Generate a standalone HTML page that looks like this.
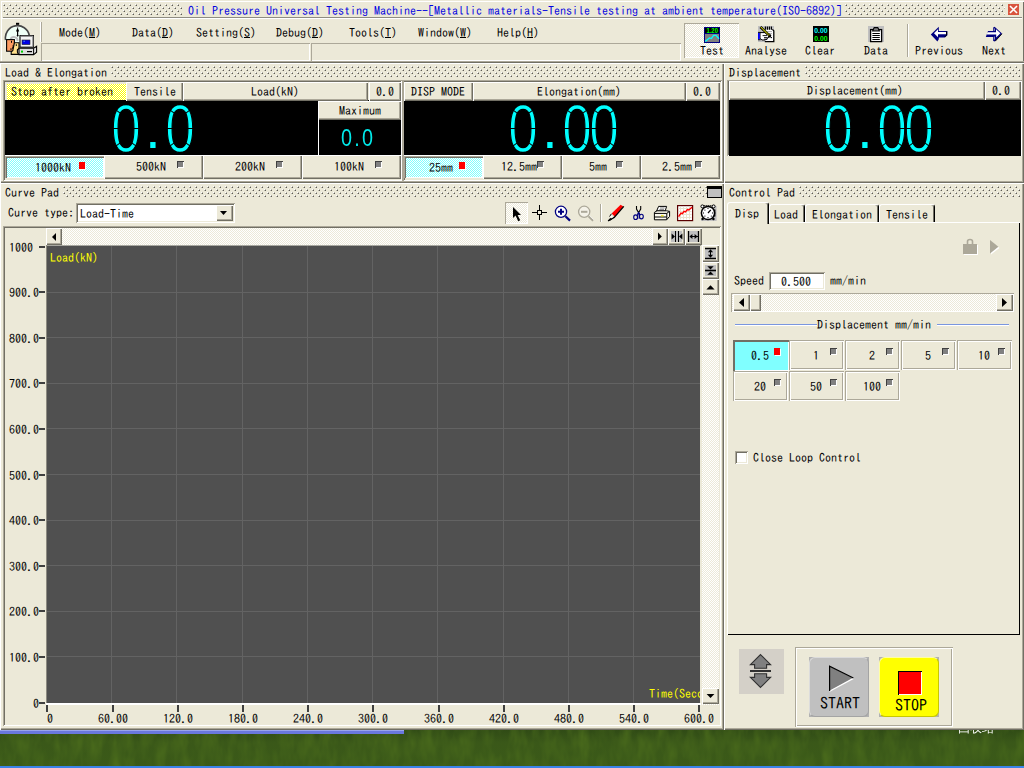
<!DOCTYPE html>
<html><head><meta charset="utf-8"><title>Oil Pressure Universal Testing Machine</title>
<style>
html,body{margin:0;padding:0;}
body{width:1024px;height:768px;overflow:hidden;position:relative;background:#3d5c1a;font-family:"Liberation Mono",monospace;}
div,span.t,svg.a{position:absolute;box-sizing:border-box;}
.t{font:12px/12px "IPAGothic","Noto Sans Mono CJK JP","WenQuanYi Zen Hei Mono","Liberation Mono",monospace;white-space:pre;letter-spacing:0;}
.dith{background-image:repeating-conic-gradient(#fff 0 25%,#ECE9D8 0 50%);background-size:2px 2px;}
.lcd{font-family:"Liberation Sans",sans-serif;color:#0ff;white-space:pre;position:absolute;}
.ld,.lp{position:absolute;display:block;font-family:"Liberation Sans",sans-serif;color:#0ff;text-align:center;}
.ld{width:44px;font-size:69px;line-height:66px;height:66px;transform:scaleX(0.77);transform-origin:50% 0;-webkit-text-stroke:1.4px #000;}
.lp{width:26px;font-size:55px;line-height:50px;height:50px;}
</style></head><body>
<svg width="0" height="0" style="position:absolute"><defs>
<pattern id="dot0" width="6" height="6" patternUnits="userSpaceOnUse"><rect x="0" y="0" width="1" height="1" fill="#fff"/><rect x="1" y="0" width="1" height="1" fill="#b9b7ab"/><rect x="0" y="1" width="1" height="1" fill="#b9b7ab"/><rect x="1" y="1" width="1" height="1" fill="#5c5a53"/><rect x="3" y="3" width="1" height="1" fill="#fff"/><rect x="4" y="3" width="1" height="1" fill="#b9b7ab"/><rect x="3" y="4" width="1" height="1" fill="#b9b7ab"/><rect x="4" y="4" width="1" height="1" fill="#5c5a53"/></pattern>
</defs></svg>

<svg class="a" style="left:0;top:729px" width="1024" height="39"><defs><filter id="gr" x="0" y="0" width="100%" height="100%" color-interpolation-filters="sRGB"><feTurbulence type="fractalNoise" baseFrequency="0.09 0.035" numOctaves="3" seed="7"/><feColorMatrix values="0 0 0 0 0.30  0 0 0 0 0.43  0 0 0 0 0.11  1.0 1.0 0 0 -0.80"/></filter><linearGradient id="gg" x1="0" y1="0" x2="0" y2="1"><stop offset="0" stop-color="#2f4a15"/><stop offset="0.35" stop-color="#3a5819"/><stop offset="1" stop-color="#3b5a18"/></linearGradient></defs><rect width="1024" height="39" fill="url(#gg)"/><rect width="1024" height="39" filter="url(#gr)"/></svg>
<div style="left:0px;top:730px;width:404px;height:4px;background:#6a78de;border-top:1px solid #9aa4ee;"></div>
<div style="left:0px;top:766px;width:1024px;height:2px;background:#3a84ea;"></div>
<span style="position:absolute;left:958px;top:722px;font:12px/12px 'Liberation Sans','WenQuanYi Zen Hei','Noto Sans CJK SC',sans-serif;color:#fff;white-space:pre">回收站</span>
<div style="left:0px;top:0px;width:1024px;height:730px;background:#ECE9D8;box-shadow:inset 1px 1px 0 #ECE9D8,inset 2px 2px 0 #FFFFFF,inset -1px -1px 0 #716F64;"></div>
<svg class="a" style="left:3px;top:4px" width="180" height="12" shape-rendering="crispEdges"><rect width="180" height="12" fill="url(#dot0)"/></svg>
<svg class="a" style="left:845px;top:4px" width="160" height="12" shape-rendering="crispEdges"><rect width="160" height="12" fill="url(#dot0)"/></svg>
<div style="left:3px;top:17px;width:1019px;height:1px;background:#8e8c82;"></div>
<div style="left:2px;top:18px;width:1020px;height:1px;background:#FFFFFF;"></div>
<span class="t" style="left:188px;top:4px;color:#0000e0;">Oil Pressure Universal Testing Machine--[Metallic materials-Tensile testing at ambient temperature(ISO-6892)]</span>
<svg class="a" style="left:1008px;top:4px" width="11" height="11"><rect width="11" height="11" fill="#d9553f"/><path d="M2 2L9 9M9 2L2 9" stroke="#fff" stroke-width="1.6"/></svg>
<div style="left:40px;top:22px;width:1px;height:20px;background:#FFFFFF;"></div>
<div style="left:41px;top:22px;width:1px;height:20px;background:#ACA899;"></div>
<span class="t" style="left:59px;top:26px;color:#000;">Mode(M)</span>
<div style="left:89px;top:37px;width:6px;height:1px;background:#000;"></div>
<span class="t" style="left:132px;top:26px;color:#000;">Data(D)</span>
<div style="left:162px;top:37px;width:6px;height:1px;background:#000;"></div>
<span class="t" style="left:196px;top:26px;color:#000;">Setting(S)</span>
<div style="left:244px;top:37px;width:6px;height:1px;background:#000;"></div>
<span class="t" style="left:276px;top:26px;color:#000;">Debug(D)</span>
<div style="left:312px;top:37px;width:6px;height:1px;background:#000;"></div>
<span class="t" style="left:349px;top:26px;color:#000;">Tools(T)</span>
<div style="left:385px;top:37px;width:6px;height:1px;background:#000;"></div>
<span class="t" style="left:418px;top:26px;color:#000;">Window(W)</span>
<div style="left:460px;top:37px;width:6px;height:1px;background:#000;"></div>
<span class="t" style="left:497px;top:26px;color:#000;">Help(H)</span>
<div style="left:527px;top:37px;width:6px;height:1px;background:#000;"></div>
<div style="left:41px;top:43px;width:269px;height:18px;background:#ECE9D8;box-shadow:inset 1px 1px 0 #ACA899,inset -1px -1px 0 #FFFFFF;"></div>
<div style="left:311px;top:43px;width:370px;height:18px;background:#ECE9D8;box-shadow:inset 1px 1px 0 #ACA899,inset -1px -1px 0 #FFFFFF;"></div>
<div class="dith" style="left:684px;top:23px;width:55px;height:35px;box-shadow:inset 1px 1px 0 #ACA899,inset -1px -1px 0 #FFFFFF;"></div>
<span class="t" style="left:700px;top:44px;color:#000;">Test</span>
<span class="t" style="left:745px;top:44px;color:#000;">Analyse</span>
<span class="t" style="left:805px;top:44px;color:#000;">Clear</span>
<span class="t" style="left:864px;top:44px;color:#000;">Data</span>
<span class="t" style="left:915px;top:44px;color:#000;">Previous</span>
<span class="t" style="left:982px;top:44px;color:#000;">Next</span>
<div style="left:907px;top:24px;width:1px;height:33px;background:#ACA899;"></div>
<div style="left:908px;top:24px;width:1px;height:33px;background:#FFFFFF;"></div>
<div style="left:0px;top:61px;width:1024px;height:1px;background:#ACA899;"></div>
<div style="left:0px;top:62px;width:1024px;height:1px;background:#716F64;"></div>
<svg class="a" style="left:4px;top:22px" width="34" height="34" viewBox="4 22 34 34">
<path d="M5.6 40 A12 12 0 0 1 29.6 36 L29.6 47 L5.6 47Z" fill="#effff6"/>
<path d="M5.6 40 A12 12 0 0 1 29.3 35.5" fill="none" stroke="#454545" stroke-width="1.6"/>
<rect x="16" y="22.8" width="3.2" height="2" fill="#000"/>
<path d="M17.6 26v2" stroke="#999" stroke-width="1.4"/>
<path d="M17.6 28.5v8M16.6 31.5l1-2.5 1 2.5M16.8 35.5h1.8" stroke="#000" stroke-width="1.2" fill="none"/>
<path d="M10.5 39.5a3.6 3.6 0 0 1 7 1.5" fill="none" stroke="#bbb" stroke-width="1.8"/>
<rect x="6.6" y="39.6" width="7.8" height="11.6" fill="#ff9d62" stroke="#000" stroke-width="1.1"/>
<rect x="11" y="40.8" width="1" height="2" fill="#000"/><path d="M10 48.8c1.2 1 2.6.4 3-2M12.4 46h1.8" stroke="#000" stroke-width="1" fill="none"/>
<path d="M14.4 42.8h4.6v5.6l-1.6 1.4v2.4l1.2 2.2h-7.4v-2.6l1.6-1.2z" fill="#ffe08c" stroke="#000" stroke-width="1.1"/>
<rect x="15.8" y="44.2" width="1" height="1.8" fill="#000"/>
<rect x="20" y="35.6" width="13.4" height="11.6" fill="#f4f4f4" stroke="#000" stroke-width="1.1"/>
<path d="M20.6 36.2h12.2" stroke="#888" stroke-width="1.2"/><path d="M32.8 36.2v10.4" stroke="#999" stroke-width="1.2"/>
<rect x="22" y="40" width="8" height="4.6" fill="#0000e6" stroke="#222" stroke-width=".6"/>
<rect x="23.4" y="40.8" width="1.6" height=".8" fill="#4aa8ff"/>
<path d="M19 48.2h14.6l3-2v6l-3 2.4H19z" fill="#dedede" stroke="#000" stroke-width="1.1"/>
<path d="M33.6 48.4v6" stroke="#000" stroke-width="1"/>
<rect x="21" y="50.6" width="2" height="2" fill="#00d000"/><rect x="27" y="51" width="5" height="1.2" fill="#000"/>
</svg>
<svg class="a" style="left:704px;top:27px" width="16" height="16" viewBox="0 0 16 16">
<rect x=".5" y=".5" width="15" height="15" fill="#808080" stroke="#000080"/>
<rect x="1" y="1" width="14" height="5.5" fill="#000"/><rect x="1" y="6" width="14" height="1" fill="#000080"/>
<text x="8.2" y="6" font-family="Liberation Sans,sans-serif" font-weight="bold" font-size="6.6" fill="#0f0" text-anchor="middle" textLength="11.5" lengthAdjust="spacingAndGlyphs">1.20</text>
<path d="M1.2 14.6L5.4 11l2 .6L9.6 8.3h2.4l3 3.4" fill="none" stroke="#0ff" stroke-width="1.3"/>
</svg>
<svg class="a" style="left:758px;top:26px" width="17" height="17" viewBox="758 26 17 17">
<rect x="758" y="26" width="7" height="16" fill="#c0c0c0"/><rect x="764" y="26" width="10" height="4" fill="#c0c0c0"/>
<path d="M765 29.6h7.4l1.2 1.2v10.6h-8.6" fill="#fff"/>
<path d="M772.4 29.4l1.4 1.4v10.8h-9" fill="none" stroke="#000" stroke-width="1.3"/>
<path d="M765.4 26.4v3.4M767.4 26.4v3.4M769.4 26.4v3.4M771.4 26.4v3.4" stroke="#000" stroke-width="1.2"/>
<path d="M767 31.6h5M768 33.6h4M768 37.6h4" stroke="#999" stroke-width=".8"/>
<path d="M760 32.6h5.4l1 1.6h3.6l.4 1.6-2 .4.4 1.2-1.6.6v1.2l-2.4.8H762l-2-1.6z" fill="#fff" stroke="#000" stroke-width="1"/>
<path d="M762.6 35.6h4.4M764 37.6h3.4M764 39.2h2.6" stroke="#000" stroke-width=".9"/>
<rect x="758" y="32.6" width="1.8" height="7" fill="#0000ff"/><path d="M758 32.4h2.6M758 39.8h2.6" stroke="#000" stroke-width=".9"/>
<path d="M760.4 27l10.2 9.6" stroke="#000" stroke-width="2.6"/><path d="M761 27.4l8.6 8.2" stroke="#ee0" stroke-width="1.3" stroke-dasharray="1 .5"/>
<path d="M770 36.4l2 1.6" stroke="#000" stroke-width="1"/>
</svg>
<svg class="a" style="left:813px;top:26px" width="16" height="16" viewBox="0 0 16 16">
<rect width="16" height="16" fill="#000"/>
<text x="8" y="7.2" font-family="Liberation Sans,sans-serif" font-weight="bold" font-size="8" fill="#0ff" text-anchor="middle" textLength="13.4" lengthAdjust="spacingAndGlyphs">0.00</text>
<text x="8" y="15.2" font-family="Liberation Sans,sans-serif" font-weight="bold" font-size="8" fill="#0f0" text-anchor="middle" textLength="13.4" lengthAdjust="spacingAndGlyphs">0.00</text>
</svg>
<svg class="a" style="left:868px;top:26px" width="16" height="17" viewBox="868 26 16 17">
<rect x="868" y="26" width="16" height="16" fill="#c0c0c0"/>
<rect x="870.6" y="29.6" width="11" height="12" fill="#fff" stroke="#000" stroke-width="1.3"/>
<path d="M872.6 31l1.6-3.4h3.6l1.6 3.4z" fill="#808080" stroke="#000" stroke-width="1.1"/>
<path d="M872.4 33.5h7.4M872.4 35.5h7.4M872.4 37.5h7.4M872.4 39.5h7.4" stroke="#000" stroke-width="1"/>
</svg>
<svg class="a" style="left:930px;top:26px" width="19" height="17" viewBox="930 26 19 17">
<path d="M930.8 34.4L938.8 26.8V31H947.4V35.2L945 37.4H938.8V39.2L937.4 41.4Z" fill="#000080"/>
<path d="M934 33.3L938 29.3V32.1H946V34.2H938V37.2Z" fill="#fff"/>
<path d="M946.6 31.4v3.6l-2 2" stroke="#000" stroke-width="1" fill="none"/>
</svg>
<svg class="a" style="left:985px;top:26px" width="19" height="17" viewBox="985 26 19 17">
<path d="M1002 33.4L994.6 26.8L993.2 27.6V31H988L985.8 37H993.2V41L995 41.4Z" fill="#000080"/>
<path d="M987.4 32.2H996V29.2L1000.4 33.3L996.2 37.6V34.6H986.8Z" fill="#fff"/>
<path d="M994.4 28.4v2.4M994.4 36.6v3" stroke="#ccc" stroke-width=".8"/>
<path d="M995.4 41L1002 33.8" stroke="#000" stroke-width=".9"/>
</svg>

<div style="left:0px;top:63px;width:724px;height:120px;background:#ECE9D8;box-shadow:inset 1px 1px 0 #FFFFFF,inset -1px -1px 0 #716F64,inset -2px -2px 0 #ACA899;"></div>
<span class="t" style="left:5px;top:66px;color:#000;">Load &amp; Elongation</span>
<svg class="a" style="left:111px;top:66px" width="609" height="12" shape-rendering="crispEdges"><rect width="609" height="12" fill="url(#dot0)"/></svg>
<div style="left:724px;top:63px;width:300px;height:120px;background:#ECE9D8;box-shadow:inset 1px 1px 0 #FFFFFF,inset -1px -1px 0 #716F64,inset -2px -2px 0 #ACA899;"></div>
<span class="t" style="left:729px;top:66px;color:#000;">Displacement</span>
<svg class="a" style="left:805px;top:66px" width="215" height="12" shape-rendering="crispEdges"><rect width="215" height="12" fill="url(#dot0)"/></svg>
<div style="left:0px;top:183px;width:724px;height:547px;background:#ECE9D8;box-shadow:inset 1px 1px 0 #FFFFFF,inset -1px -1px 0 #716F64,inset -2px -2px 0 #ACA899;"></div>
<span class="t" style="left:5px;top:186px;color:#000;">Curve Pad</span>
<svg class="a" style="left:63px;top:186px" width="657" height="12" shape-rendering="crispEdges"><rect width="657" height="12" fill="url(#dot0)"/></svg>
<div style="left:724px;top:183px;width:300px;height:547px;background:#ECE9D8;box-shadow:inset 1px 1px 0 #FFFFFF,inset -1px -1px 0 #716F64,inset -2px -2px 0 #ACA899;"></div>
<span class="t" style="left:729px;top:186px;color:#000;">Control Pad</span>
<svg class="a" style="left:799px;top:186px" width="221" height="12" shape-rendering="crispEdges"><rect width="221" height="12" fill="url(#dot0)"/></svg>
<div style="left:3px;top:80px;width:399px;height:101px;background:#ECE9D8;box-shadow:inset 1px 1px 0 #ACA899,inset -1px -1px 0 #FFFFFF,inset 2px 2px 0 #716F64,inset -2px -2px 0 #ECE9D8;"></div>
<div style="left:5px;top:82px;width:396px;height:18px;background:#ECE9D8;"></div>
<div style="left:5px;top:100px;width:396px;height:55px;background:#000;"></div>
<div style="left:7px;top:84px;width:119px;height:16px;background-image:repeating-conic-gradient(#fff 0 25%,#ff0 0 50%);background-size:2px 2px;"></div>
<span class="t" style="left:11px;top:85px;color:#000;">Stop after broken</span>
<div style="left:126px;top:82px;width:57px;height:19px;background:#ECE9D8;box-shadow:inset 1px 1px 0 #FFFFFF,inset -1px -1px 0 #716F64,inset -2px -2px 0 #ACA899;"></div>
<span class="t" style="left:134px;top:85px;color:#000;">Tensile</span>
<div style="left:183px;top:82px;width:185px;height:19px;background:#ECE9D8;box-shadow:inset 1px 1px 0 #FFFFFF,inset -1px -1px 0 #716F64,inset -2px -2px 0 #ACA899;"></div>
<span class="t" style="left:251px;top:85px;color:#000;">Load(kN)</span>
<div style="left:369px;top:82px;width:32px;height:19px;background:#ECE9D8;box-shadow:inset 1px 1px 0 #FFFFFF,inset -1px -1px 0 #716F64,inset -2px -2px 0 #ACA899;"></div>
<span class="t" style="left:376px;top:85px;color:#000;">0.0</span>
<div style="left:318px;top:101px;width:83px;height:19px;background:#ECE9D8;box-shadow:inset 1px 1px 0 #FFFFFF,inset -1px -1px 0 #716F64,inset -2px -2px 0 #ACA899;"></div>
<span class="t" style="left:339px;top:104px;color:#000;">Maximum</span>
<div style="left:318px;top:120px;width:1px;height:35px;background:#FFFFFF;"></div>
<span class="ld" style="left:104px;top:96px;">0</span><div style="left:113px;top:128px;width:7px;height:1px;background:#000"></div><div style="left:132px;top:128px;width:7px;height:1px;background:#000"></div><div style="left:114px;top:111px;width:8px;height:1px;background:#000;transform:rotate(35deg)"></div><div style="left:130px;top:111px;width:8px;height:1px;background:#000;transform:rotate(-35deg)"></div><div style="left:114px;top:144px;width:8px;height:1px;background:#000;transform:rotate(-35deg)"></div><div style="left:130px;top:144px;width:8px;height:1px;background:#000;transform:rotate(35deg)"></div><span class="lp" style="left:140px;top:104px;">.</span><span class="ld" style="left:158px;top:96px;">0</span><div style="left:167px;top:128px;width:7px;height:1px;background:#000"></div><div style="left:186px;top:128px;width:7px;height:1px;background:#000"></div><div style="left:168px;top:111px;width:8px;height:1px;background:#000;transform:rotate(35deg)"></div><div style="left:184px;top:111px;width:8px;height:1px;background:#000;transform:rotate(-35deg)"></div><div style="left:168px;top:144px;width:8px;height:1px;background:#000;transform:rotate(-35deg)"></div><div style="left:184px;top:144px;width:8px;height:1px;background:#000;transform:rotate(35deg)"></div>
<div class="lcd" style="left:340.5px;top:128px;font-size:23px;line-height:20px;letter-spacing:2.6px;color:#00e8e8;transform:scaleX(0.86);transform-origin:0 0">0.0</div>
<div style="left:5px;top:155px;width:99px;height:1px;background:#FFFFFF;"></div>
<div style="left:5px;top:156px;width:99px;height:22px;background-image:repeating-conic-gradient(#fff 0 25%,#80ffff 0 50%);background-size:2px 2px;box-shadow:inset 1px 1px 0 #ACA899,inset 2px 2px 0 #716F64,inset -1px -1px 0 #FFFFFF;"></div>
<span class="t" style="left:35px;top:161px;color:#000;">1000kN</span>
<div style="left:79px;top:162px;width:6px;height:7px;background:#f00;box-shadow:1px 1px 0 #fff;"></div>
<div style="left:104px;top:155px;width:99px;height:24px;background:#ECE9D8;box-shadow:inset 1px 1px 0 #FFFFFF,inset -1px -1px 0 #716F64,inset -2px -2px 0 #ACA899;"></div>
<span class="t" style="left:136px;top:160px;color:#000;">500kN</span>
<div style="left:177px;top:161px;width:7px;height:7px;background:#808080;box-shadow:inset 1px 1px 0 #404040,inset -1px -1px 0 #fff;"></div>
<div style="left:203px;top:155px;width:99px;height:24px;background:#ECE9D8;box-shadow:inset 1px 1px 0 #FFFFFF,inset -1px -1px 0 #716F64,inset -2px -2px 0 #ACA899;"></div>
<span class="t" style="left:235px;top:160px;color:#000;">200kN</span>
<div style="left:276px;top:161px;width:7px;height:7px;background:#808080;box-shadow:inset 1px 1px 0 #404040,inset -1px -1px 0 #fff;"></div>
<div style="left:302px;top:155px;width:99px;height:24px;background:#ECE9D8;box-shadow:inset 1px 1px 0 #FFFFFF,inset -1px -1px 0 #716F64,inset -2px -2px 0 #ACA899;"></div>
<span class="t" style="left:334px;top:160px;color:#000;">100kN</span>
<div style="left:375px;top:161px;width:7px;height:7px;background:#808080;box-shadow:inset 1px 1px 0 #404040,inset -1px -1px 0 #fff;"></div>
<div style="left:402px;top:80px;width:1px;height:101px;background:#ACA899;"></div>
<div style="left:403px;top:80px;width:319px;height:101px;background:#ECE9D8;box-shadow:inset 1px 1px 0 #ACA899,inset -1px -1px 0 #FFFFFF,inset 2px 2px 0 #716F64,inset -2px -2px 0 #ECE9D8;"></div>
<div style="left:404px;top:82px;width:316px;height:18px;background:#ECE9D8;"></div>
<div style="left:404px;top:100px;width:316px;height:55px;background:#000;"></div>
<div style="left:404px;top:82px;width:69px;height:19px;background:#ECE9D8;box-shadow:inset 1px 1px 0 #FFFFFF,inset -1px -1px 0 #716F64,inset -2px -2px 0 #ACA899;"></div>
<span class="t" style="left:411px;top:85px;color:#000;">DISP MODE</span>
<div style="left:473px;top:82px;width:213px;height:19px;background:#ECE9D8;box-shadow:inset 1px 1px 0 #FFFFFF,inset -1px -1px 0 #716F64,inset -2px -2px 0 #ACA899;"></div>
<span class="t" style="left:537px;top:85px;color:#000;">Elongation(mm)</span>
<div style="left:686px;top:82px;width:34px;height:19px;background:#ECE9D8;box-shadow:inset 1px 1px 0 #FFFFFF,inset -1px -1px 0 #716F64,inset -2px -2px 0 #ACA899;"></div>
<span class="t" style="left:693px;top:85px;color:#000;">0.0</span>
<span class="ld" style="left:501px;top:96px;">0</span><div style="left:510px;top:128px;width:7px;height:1px;background:#000"></div><div style="left:529px;top:128px;width:7px;height:1px;background:#000"></div><div style="left:511px;top:111px;width:8px;height:1px;background:#000;transform:rotate(35deg)"></div><div style="left:527px;top:111px;width:8px;height:1px;background:#000;transform:rotate(-35deg)"></div><div style="left:511px;top:144px;width:8px;height:1px;background:#000;transform:rotate(-35deg)"></div><div style="left:527px;top:144px;width:8px;height:1px;background:#000;transform:rotate(35deg)"></div><span class="lp" style="left:537px;top:104px;">.</span><span class="ld" style="left:555px;top:96px;">0</span><div style="left:564px;top:128px;width:7px;height:1px;background:#000"></div><div style="left:583px;top:128px;width:7px;height:1px;background:#000"></div><div style="left:565px;top:111px;width:8px;height:1px;background:#000;transform:rotate(35deg)"></div><div style="left:581px;top:111px;width:8px;height:1px;background:#000;transform:rotate(-35deg)"></div><div style="left:565px;top:144px;width:8px;height:1px;background:#000;transform:rotate(-35deg)"></div><div style="left:581px;top:144px;width:8px;height:1px;background:#000;transform:rotate(35deg)"></div><span class="ld" style="left:582px;top:96px;">0</span><div style="left:591px;top:128px;width:7px;height:1px;background:#000"></div><div style="left:610px;top:128px;width:7px;height:1px;background:#000"></div><div style="left:592px;top:111px;width:8px;height:1px;background:#000;transform:rotate(35deg)"></div><div style="left:608px;top:111px;width:8px;height:1px;background:#000;transform:rotate(-35deg)"></div><div style="left:592px;top:144px;width:8px;height:1px;background:#000;transform:rotate(-35deg)"></div><div style="left:608px;top:144px;width:8px;height:1px;background:#000;transform:rotate(35deg)"></div>
<div style="left:404px;top:155px;width:79px;height:1px;background:#FFFFFF;"></div>
<div style="left:404px;top:156px;width:79px;height:22px;background-image:repeating-conic-gradient(#fff 0 25%,#80ffff 0 50%);background-size:2px 2px;box-shadow:inset 1px 1px 0 #ACA899,inset 2px 2px 0 #716F64,inset -1px -1px 0 #FFFFFF;"></div>
<span class="t" style="left:429px;top:161px;color:#000;">25mm</span>
<div style="left:459px;top:162px;width:6px;height:7px;background:#f00;box-shadow:1px 1px 0 #fff;"></div>
<div style="left:483px;top:155px;width:79px;height:24px;background:#ECE9D8;box-shadow:inset 1px 1px 0 #FFFFFF,inset -1px -1px 0 #716F64,inset -2px -2px 0 #ACA899;"></div>
<span class="t" style="left:501px;top:160px;color:#000;">12.5mm</span>
<div style="left:537px;top:161px;width:7px;height:7px;background:#808080;box-shadow:inset 1px 1px 0 #404040,inset -1px -1px 0 #fff;"></div>
<div style="left:562px;top:155px;width:79px;height:24px;background:#ECE9D8;box-shadow:inset 1px 1px 0 #FFFFFF,inset -1px -1px 0 #716F64,inset -2px -2px 0 #ACA899;"></div>
<span class="t" style="left:589px;top:160px;color:#000;">5mm</span>
<div style="left:616px;top:161px;width:7px;height:7px;background:#808080;box-shadow:inset 1px 1px 0 #404040,inset -1px -1px 0 #fff;"></div>
<div style="left:641px;top:155px;width:79px;height:24px;background:#ECE9D8;box-shadow:inset 1px 1px 0 #FFFFFF,inset -1px -1px 0 #716F64,inset -2px -2px 0 #ACA899;"></div>
<span class="t" style="left:662px;top:160px;color:#000;">2.5mm</span>
<div style="left:695px;top:161px;width:7px;height:7px;background:#808080;box-shadow:inset 1px 1px 0 #404040,inset -1px -1px 0 #fff;"></div>
<div style="left:727px;top:80px;width:295px;height:76px;background:#ECE9D8;box-shadow:inset 1px 1px 0 #ACA899,inset -1px -1px 0 #FFFFFF,inset 2px 2px 0 #716F64,inset -2px -2px 0 #ECE9D8;"></div>
<div style="left:729px;top:81px;width:292px;height:19px;background:#ECE9D8;"></div>
<div style="left:729px;top:81px;width:256px;height:19px;background:#ECE9D8;box-shadow:inset 1px 1px 0 #FFFFFF,inset -1px -1px 0 #716F64,inset -2px -2px 0 #ACA899;"></div>
<span class="t" style="left:807px;top:84px;color:#000;">Displacement(mm)</span>
<div style="left:985px;top:81px;width:36px;height:19px;background:#ECE9D8;box-shadow:inset 1px 1px 0 #FFFFFF,inset -1px -1px 0 #716F64,inset -2px -2px 0 #ACA899;"></div>
<span class="t" style="left:992px;top:84px;color:#000;">0.0</span>
<div style="left:729px;top:100px;width:292px;height:56px;background:#000;"></div>
<span class="ld" style="left:816px;top:96px;">0</span><div style="left:825px;top:128px;width:7px;height:1px;background:#000"></div><div style="left:844px;top:128px;width:7px;height:1px;background:#000"></div><div style="left:826px;top:111px;width:8px;height:1px;background:#000;transform:rotate(35deg)"></div><div style="left:842px;top:111px;width:8px;height:1px;background:#000;transform:rotate(-35deg)"></div><div style="left:826px;top:144px;width:8px;height:1px;background:#000;transform:rotate(-35deg)"></div><div style="left:842px;top:144px;width:8px;height:1px;background:#000;transform:rotate(35deg)"></div><span class="lp" style="left:852px;top:104px;">.</span><span class="ld" style="left:870px;top:96px;">0</span><div style="left:879px;top:128px;width:7px;height:1px;background:#000"></div><div style="left:898px;top:128px;width:7px;height:1px;background:#000"></div><div style="left:880px;top:111px;width:8px;height:1px;background:#000;transform:rotate(35deg)"></div><div style="left:896px;top:111px;width:8px;height:1px;background:#000;transform:rotate(-35deg)"></div><div style="left:880px;top:144px;width:8px;height:1px;background:#000;transform:rotate(-35deg)"></div><div style="left:896px;top:144px;width:8px;height:1px;background:#000;transform:rotate(35deg)"></div><span class="ld" style="left:897px;top:96px;">0</span><div style="left:906px;top:128px;width:7px;height:1px;background:#000"></div><div style="left:925px;top:128px;width:7px;height:1px;background:#000"></div><div style="left:907px;top:111px;width:8px;height:1px;background:#000;transform:rotate(35deg)"></div><div style="left:923px;top:111px;width:8px;height:1px;background:#000;transform:rotate(-35deg)"></div><div style="left:907px;top:144px;width:8px;height:1px;background:#000;transform:rotate(-35deg)"></div><div style="left:923px;top:144px;width:8px;height:1px;background:#000;transform:rotate(35deg)"></div>
<span class="t" style="left:8px;top:206px;color:#000;">Curve type:</span>
<div style="left:76px;top:203px;width:159px;height:20px;background:#fff;box-shadow:inset 1px 1px 0 #ACA899,inset -1px -1px 0 #FFFFFF,inset 2px 2px 0 #716F64,inset -2px -2px 0 #ECE9D8;"></div>
<span class="t" style="left:80px;top:207px;color:#000;">Load-Time</span>
<div style="left:216px;top:205px;width:17px;height:16px;background:#ECE9D8;box-shadow:inset 1px 1px 0 #FFFFFF,inset -1px -1px 0 #716F64,inset -2px -2px 0 #ACA899;"></div>
<svg class="a" style="left:220px;top:211px" width="7" height="4"><path d="M0 0h7L3.5 4z" fill="#000"/></svg>
<div style="left:3px;top:226px;width:718px;height:500px;background:#ECE9D8;box-shadow:inset 1px 1px 0 #ACA899,inset -1px -1px 0 #FFFFFF,inset 2px 2px 0 #716F64,inset -2px -2px 0 #ECE9D8;"></div>
<div class="dith" style="left:46px;top:228px;width:606px;height:17px;"></div>
<div style="left:46px;top:228px;width:16px;height:17px;background:#ECE9D8;box-shadow:inset 1px 1px 0 #FFFFFF,inset -1px -1px 0 #716F64,inset -2px -2px 0 #ACA899;"></div>
<div style="left:652px;top:228px;width:16px;height:17px;background:#ECE9D8;box-shadow:inset 1px 1px 0 #FFFFFF,inset -1px -1px 0 #716F64,inset -2px -2px 0 #ACA899;"></div>
<div style="left:668px;top:228px;width:17px;height:17px;background:#ECE9D8;box-shadow:inset 1px 1px 0 #FFFFFF,inset -1px -1px 0 #716F64,inset -2px -2px 0 #ACA899;"></div>
<div style="left:671px;top:231px;width:11px;height:11px;background:#c0c0c0;"></div>
<div style="left:685px;top:228px;width:17px;height:17px;background:#ECE9D8;box-shadow:inset 1px 1px 0 #FFFFFF,inset -1px -1px 0 #716F64,inset -2px -2px 0 #ACA899;"></div>
<div style="left:688px;top:231px;width:11px;height:11px;background:#c0c0c0;"></div>
<div class="dith" style="left:702px;top:245px;width:17px;height:460px;"></div>
<div style="left:702px;top:245px;width:17px;height:17px;background:#ECE9D8;box-shadow:inset 1px 1px 0 #FFFFFF,inset -1px -1px 0 #716F64,inset -2px -2px 0 #ACA899;"></div>
<div style="left:705px;top:248px;width:11px;height:11px;background:#c0c0c0;"></div>
<div style="left:702px;top:262px;width:17px;height:17px;background:#ECE9D8;box-shadow:inset 1px 1px 0 #FFFFFF,inset -1px -1px 0 #716F64,inset -2px -2px 0 #ACA899;"></div>
<div style="left:705px;top:265px;width:11px;height:11px;background:#c0c0c0;"></div>
<div style="left:702px;top:279px;width:17px;height:16px;background:#ECE9D8;box-shadow:inset 1px 1px 0 #FFFFFF,inset -1px -1px 0 #716F64,inset -2px -2px 0 #ACA899;"></div>
<div style="left:702px;top:688px;width:17px;height:16px;background:#ECE9D8;box-shadow:inset 1px 1px 0 #FFFFFF,inset -1px -1px 0 #716F64,inset -2px -2px 0 #ACA899;"></div>
<svg class="a" style="left:47px;top:246px" width="653" height="457" shape-rendering="crispEdges"><rect width="653" height="457" fill="#505050"/><rect x="64" y="0" width="1" height="457" fill="#636363"/><rect x="129" y="0" width="1" height="457" fill="#636363"/><rect x="195" y="0" width="1" height="457" fill="#636363"/><rect x="260" y="0" width="1" height="457" fill="#636363"/><rect x="325" y="0" width="1" height="457" fill="#636363"/><rect x="390" y="0" width="1" height="457" fill="#636363"/><rect x="456" y="0" width="1" height="457" fill="#636363"/><rect x="521" y="0" width="1" height="457" fill="#636363"/><rect x="586" y="0" width="1" height="457" fill="#636363"/><rect x="0" y="46" width="653" height="1" fill="#636363"/><rect x="0" y="91" width="653" height="1" fill="#636363"/><rect x="0" y="137" width="653" height="1" fill="#636363"/><rect x="0" y="182" width="653" height="1" fill="#636363"/><rect x="0" y="228" width="653" height="1" fill="#636363"/><rect x="0" y="274" width="653" height="1" fill="#636363"/><rect x="0" y="319" width="653" height="1" fill="#636363"/><rect x="0" y="365" width="653" height="1" fill="#636363"/><rect x="0" y="410" width="653" height="1" fill="#636363"/></svg>
<div style="left:46px;top:245px;width:655px;height:1px;background:#a8a8a0;"></div>
<div style="left:46px;top:245px;width:1px;height:458px;background:#8c8a80;"></div>
<div style="left:46px;top:703px;width:655px;height:2px;background:#FFFFFF;"></div>
<span class="t" style="left:50px;top:251px;color:#ff0;">Load(kN)</span>
<div style="left:547px;top:680px;width:153px;height:20px;overflow:hidden;"><span class="t" style="left:102px;top:7px;color:#ff0">Time(Second)</span></div>
<div style="left:39px;top:246px;width:6px;height:2px;background:#404040;"></div>
<span class="t" style="left:9px;top:241px;color:#000;">1000</span>
<div style="left:39px;top:291px;width:6px;height:2px;background:#404040;"></div>
<span class="t" style="left:9px;top:286px;color:#000;">900.0</span>
<div style="left:39px;top:337px;width:6px;height:2px;background:#404040;"></div>
<span class="t" style="left:9px;top:332px;color:#000;">800.0</span>
<div style="left:39px;top:382px;width:6px;height:2px;background:#404040;"></div>
<span class="t" style="left:9px;top:377px;color:#000;">700.0</span>
<div style="left:39px;top:428px;width:6px;height:2px;background:#404040;"></div>
<span class="t" style="left:9px;top:423px;color:#000;">600.0</span>
<div style="left:39px;top:474px;width:6px;height:2px;background:#404040;"></div>
<span class="t" style="left:9px;top:469px;color:#000;">500.0</span>
<div style="left:39px;top:519px;width:6px;height:2px;background:#404040;"></div>
<span class="t" style="left:9px;top:514px;color:#000;">400.0</span>
<div style="left:39px;top:565px;width:6px;height:2px;background:#404040;"></div>
<span class="t" style="left:9px;top:560px;color:#000;">300.0</span>
<div style="left:39px;top:610px;width:6px;height:2px;background:#404040;"></div>
<span class="t" style="left:9px;top:605px;color:#000;">200.0</span>
<div style="left:39px;top:656px;width:6px;height:2px;background:#404040;"></div>
<span class="t" style="left:9px;top:651px;color:#000;">100.0</span>
<div style="left:39px;top:702px;width:6px;height:2px;background:#404040;"></div>
<span class="t" style="left:33px;top:697px;color:#000;">0</span>
<div style="left:46px;top:705px;width:2px;height:7px;background:#404040;"></div>
<span class="t" style="left:47px;top:712px;color:#000;">0</span>
<div style="left:112px;top:705px;width:2px;height:7px;background:#404040;"></div>
<span class="t" style="left:98px;top:712px;color:#000;">60.00</span>
<div style="left:177px;top:705px;width:2px;height:7px;background:#404040;"></div>
<span class="t" style="left:163px;top:712px;color:#000;">120.0</span>
<div style="left:242px;top:705px;width:2px;height:7px;background:#404040;"></div>
<span class="t" style="left:228px;top:712px;color:#000;">180.0</span>
<div style="left:307px;top:705px;width:2px;height:7px;background:#404040;"></div>
<span class="t" style="left:293px;top:712px;color:#000;">240.0</span>
<div style="left:372px;top:705px;width:2px;height:7px;background:#404040;"></div>
<span class="t" style="left:358px;top:712px;color:#000;">300.0</span>
<div style="left:438px;top:705px;width:2px;height:7px;background:#404040;"></div>
<span class="t" style="left:424px;top:712px;color:#000;">360.0</span>
<div style="left:503px;top:705px;width:2px;height:7px;background:#404040;"></div>
<span class="t" style="left:489px;top:712px;color:#000;">420.0</span>
<div style="left:568px;top:705px;width:2px;height:7px;background:#404040;"></div>
<span class="t" style="left:554px;top:712px;color:#000;">480.0</span>
<div style="left:633px;top:705px;width:2px;height:7px;background:#404040;"></div>
<span class="t" style="left:619px;top:712px;color:#000;">540.0</span>
<div style="left:698px;top:705px;width:2px;height:7px;background:#404040;"></div>
<span class="t" style="left:684px;top:712px;color:#000;">600.0</span>
<div style="left:707px;top:186px;width:15px;height:12px;background:#c0c0c0;border:1px solid #000;border-top:3px solid #000;"></div>
<div class="dith" style="left:505px;top:202px;width:23px;height:22px;box-shadow:inset 1px 1px 0 #ACA899,inset -1px -1px 0 #fff;"></div>
<svg class="a" style="left:504px;top:200px" width="220" height="26" viewBox="504 200 220 26">
<path d="M513 207V218L515.6 215.6L518.2 221.2L520.2 220.2L517.6 215H521Z" fill="#000"/>
<path d="M532 212.5h15M539.5 205v15" stroke="#000" stroke-width="1"/><rect x="537.5" y="210.5" width="4" height="4" fill="#ECE9D8" stroke="#000" stroke-width="1"/>
<circle cx="561" cy="211.8" r="5.6" fill="#fff" stroke="#000080" stroke-width="1.3"/>
<path d="M558 211.8h6M561 208.8v6" stroke="#000080" stroke-width="2"/>
<path d="M565.4 216.2l4.6 4.4" stroke="#000080" stroke-width="2.2"/>
<circle cx="584.2" cy="211.8" r="5.6" fill="#f4f2e8" stroke="#ACA899" stroke-width="1.3"/>
<path d="M581 211.8h6.4" stroke="#ACA899" stroke-width="2"/>
<path d="M588.6 216.2l4.6 4.4" stroke="#ACA899" stroke-width="2.2"/><path d="M589.4 215.6l4.4 4.2" stroke="#fff" stroke-width=".8"/>
<rect x="600" y="204" width="1" height="18" fill="#ACA899"/><rect x="601" y="204" width="1" height="18" fill="#fff"/>
<path d="M611.6 213.6L620.6 204.8L623.4 206.6L614.6 216.6Z" fill="#f00"/>
<path d="M623.8 206.4L614.2 217.4L609.4 220.2" stroke="#000" stroke-width="1.3" fill="none"/>
<path d="M611.4 213.8L609.6 216.6" stroke="#000" stroke-width="1"/><path d="M610.6 216l2 1.4" stroke="#fff" stroke-width="1.4"/>
<path d="M608 221l2.2-2.6 1.2 1z" fill="#000" stroke="#000" stroke-width="1"/>
<path d="M636.5 206v3l2 3.5M640.7 206v3l-2 3.5" stroke="#000" stroke-width="1.1" fill="none"/>
<path d="M638.6 212l-1 3.4M638.6 212l1 3" stroke="#000080" stroke-width="1.1"/>
<ellipse cx="635.6" cy="217.2" rx="1.9" ry="2.3" fill="none" stroke="#000080" stroke-width="1.1"/>
<ellipse cx="641.4" cy="216.6" rx="1.9" ry="2.3" fill="none" stroke="#000080" stroke-width="1.1"/>
<path d="M637.8 213.4v5.6M639.4 213v5.4" stroke="#000080" stroke-width="1"/>
<path d="M658.6 206.4h8l-1.4 4.6h-8.6z" fill="#fff" stroke="#000" stroke-width="1"/>
<path d="M660 208h4.6M659.4 209.6h4.6" stroke="#666" stroke-width=".8"/>
<path d="M654.4 212.4l2.6-1.6h9.6l3 .6v5l-3 3.4h-12.2z" fill="#fbf9ee" stroke="#000" stroke-width="1"/>
<path d="M654.4 213.4h12.4l2.6-2M654.4 217h12.2M666.8 213.4v6.2" stroke="#000" stroke-width="1" fill="none"/>
<rect x="661" y="215.2" width="2.6" height="1.2" fill="#e8e000"/>
<rect x="677.6" y="205.6" width="15" height="15" fill="#fff" stroke="#5a0000" stroke-width="1.2"/>
<path d="M680.5 206.5v13M683.5 206.5v13M686.5 206.5v13M689.5 206.5v13M678.5 208.5h13M678.5 211.5h13M678.5 214.5h13M678.5 217.5h13" stroke="#e9e3cf" stroke-width="1"/>
<path d="M678.6 216.6l2.4-3.6 1.4.6 1.6-2.2 1.4.6 2-2.4 1.4.4 3.2-2.8" fill="none" stroke="#f00" stroke-width="1.4"/>
<rect x="712" y="206" width="4.6" height="15" fill="#c0c0c0"/><rect x="701" y="218" width="15" height="3" fill="#c0c0c0"/>
<circle cx="702.4" cy="206.4" r="1.5" fill="#fff" stroke="#000" stroke-width="1"/><circle cx="713.6" cy="206.4" r="1.5" fill="#fff" stroke="#000" stroke-width="1"/>
<path d="M703.6 205.6h9" stroke="#000" stroke-width="1" stroke-dasharray="1.2 .8"/>
<circle cx="702.6" cy="219" r="1.2" fill="#000"/><circle cx="713.4" cy="219" r="1.2" fill="#000"/>
<circle cx="708" cy="213" r="6.6" fill="#fff" stroke="#000" stroke-width="1.5"/>
<path d="M708 213l2.8-3.2" stroke="#000" stroke-width="1.2"/>
<g fill="#000"><rect x="707.5" y="208" width="1" height="1"/><rect x="707.5" y="217" width="1" height="1"/><rect x="703" y="212.5" width="1" height="1"/><rect x="712" y="212.5" width="1" height="1"/><rect x="704.4" y="209.6" width="1" height="1"/><rect x="704.4" y="215.6" width="1" height="1"/><rect x="710.8" y="215.6" width="1" height="1"/></g>
<path d="M714.8 209.6v7" stroke="#000" stroke-width="1.2"/>
</svg>
<svg class="a" style="left:46px;top:228px" width="674" height="70" viewBox="46 228 674 70">
<path d="M56 233v8l-4-4z" fill="#000"/>
<path d="M658 232.6v7.6l3.8-3.8z" fill="#000"/>
<path d="M675.5 231v11M678.5 231v11" stroke="#000" stroke-width="1"/><path d="M671.6 233.6v5.8l3.4-2.9zM682.4 233.6v5.8l-3.4-2.9z" fill="#000"/>
<path d="M688.5 231v11M698.5 231v11" stroke="#000" stroke-width="1.3"/><path d="M690 236.5h8" stroke="#000" stroke-width="1"/><path d="M689.4 236.5l3-2.6v5.2zM697.6 236.5l-3-2.6v5.2z" fill="#000"/>
<path d="M705 248.5h11M705 258.5h11" stroke="#000" stroke-width="1.3"/><path d="M710.5 250v7" stroke="#000" stroke-width="1"/><path d="M710.5 249.2l-2.6 3h5.2zM710.5 257.8l-2.6-3h5.2z" fill="#000"/>
<path d="M705 270.5h11" stroke="#000" stroke-width="1.6"/><path d="M710.5 269.6l-3.2-3.4h6.4zM710.5 271.4l-3.2 3.4h6.4z" fill="#000"/>
<path d="M706.4 289.4h8.2l-4.1-4.2z" fill="#000"/>
</svg>
<svg class="a" style="left:706px;top:693px" width="9" height="6"><path d="M.6 1h7.8L4.5 5z" fill="#000"/></svg>

<div style="left:727px;top:222px;width:293px;height:413px;background:#ECE9D8;box-shadow:inset 1px 1px 0 #FFFFFF,inset -1px -1px 0 #000;"></div>
<div style="left:769px;top:204px;width:36px;height:18px;background:#ECE9D8;border-top:1px solid #FFFFFF;border-left:1px solid #FFFFFF;border-right:1px solid #000;box-shadow:inset -1px 0 0 #716F64;border-radius:3px 3px 0 0;"></div>
<div style="left:805px;top:204px;width:74px;height:18px;background:#ECE9D8;border-top:1px solid #FFFFFF;border-left:1px solid #FFFFFF;border-right:1px solid #000;box-shadow:inset -1px 0 0 #716F64;border-radius:3px 3px 0 0;"></div>
<div style="left:879px;top:204px;width:56px;height:18px;background:#ECE9D8;border-top:1px solid #FFFFFF;border-left:1px solid #FFFFFF;border-right:1px solid #000;box-shadow:inset -1px 0 0 #716F64;border-radius:3px 3px 0 0;"></div>
<div style="left:727px;top:202px;width:42px;height:22px;background:#ECE9D8;border-top:1px solid #FFFFFF;border-left:1px solid #FFFFFF;border-right:1px solid #000;box-shadow:inset -1px 0 0 #716F64;border-radius:3px 3px 0 0;"></div>
<div style="left:728px;top:222px;width:39px;height:2px;background:#ECE9D8;"></div>
<span class="t" style="left:735px;top:207px;color:#000;">Disp</span>
<span class="t" style="left:774px;top:208px;color:#000;">Load</span>
<span class="t" style="left:812px;top:208px;color:#000;">Elongation</span>
<span class="t" style="left:886px;top:208px;color:#000;">Tensile</span>
<svg class="a" style="left:960px;top:238px" width="42" height="18" viewBox="960 238 42 18">
<path d="M964 245v10h14v-10" fill="#fff"/><path d="M991 241.4v13l8.4-6.5z" fill="#fff"/>
<rect x="963" y="244" width="14" height="10" fill="#ACA899"/>
<path d="M967.5 244v-2.5a2.5 2 0 0 1 5 0V244" fill="none" stroke="#ACA899" stroke-width="1.6"/>
<path d="M990 240v13.4l8.4-6.7z" fill="#ACA899"/>
</svg>

<span class="t" style="left:734px;top:274px;color:#000;">Speed</span>
<div style="left:769px;top:272px;width:56px;height:18px;background:#fff;box-shadow:inset 1px 1px 0 #ACA899,inset -1px -1px 0 #FFFFFF,inset 2px 2px 0 #716F64,inset -2px -2px 0 #ECE9D8;"></div>
<span class="t" style="left:781px;top:275px;color:#000;">0.500</span>
<span class="t" style="left:830px;top:274px;color:#000;">mm/min</span>
<div class="dith" style="left:731px;top:293px;width:283px;height:19px;box-shadow:inset 1px 1px 0 #ACA899,inset -1px -1px 0 #FFFFFF;"></div>
<div style="left:733px;top:294px;width:17px;height:17px;background:#ECE9D8;box-shadow:inset 1px 1px 0 #FFFFFF,inset -1px -1px 0 #716F64,inset -2px -2px 0 #ACA899;"></div>
<div style="left:750px;top:294px;width:11px;height:17px;background:#ECE9D8;box-shadow:inset 1px 1px 0 #FFFFFF,inset -1px -1px 0 #716F64,inset -2px -2px 0 #ACA899;"></div>
<div style="left:996px;top:294px;width:17px;height:17px;background:#ECE9D8;box-shadow:inset 1px 1px 0 #FFFFFF,inset -1px -1px 0 #716F64,inset -2px -2px 0 #ACA899;"></div>
<svg class="a" style="left:739px;top:298px" width="5" height="9"><path d="M5 0v9L0 4.5z" fill="#000"/></svg>
<svg class="a" style="left:1002px;top:298px" width="5" height="9"><path d="M0 0v9L5 4.5z" fill="#000"/></svg>
<div style="left:735px;top:324px;width:82px;height:1px;background:#7a96df;"></div>
<div style="left:735px;top:325px;width:82px;height:1px;background:#FFFFFF;"></div>
<div style="left:937px;top:324px;width:72px;height:1px;background:#7a96df;"></div>
<div style="left:937px;top:325px;width:72px;height:1px;background:#FFFFFF;"></div>
<span class="t" style="left:817px;top:318px;color:#000;">Displacement mm/min</span>
<div style="left:733px;top:340px;width:56px;height:31px;background:#80ffff;box-shadow:inset 1px 1px 0 #716F64,inset 2px 2px 0 #716F64,inset -1px -1px 0 #FFFFFF;"></div>
<span class="t" style="left:751px;top:349px;color:#000;">0.5</span>
<div style="left:774px;top:348px;width:6px;height:7px;background:#f00;box-shadow:1px 1px 0 #fff;"></div>
<div style="left:789px;top:340px;width:55px;height:30px;background:#ECE9D8;box-shadow:inset 1px 1px 0 #ACA899,inset -1px -1px 0 #FFFFFF,inset 2px 2px 0 #FFFFFF,inset -2px -2px 0 #ACA899;"></div>
<span class="t" style="left:813px;top:349px;color:#000;">1</span>
<div style="left:830px;top:348px;width:7px;height:7px;background:#808080;box-shadow:inset 1px 1px 0 #404040,inset -1px -1px 0 #fff;"></div>
<div style="left:845px;top:340px;width:55px;height:30px;background:#ECE9D8;box-shadow:inset 1px 1px 0 #ACA899,inset -1px -1px 0 #FFFFFF,inset 2px 2px 0 #FFFFFF,inset -2px -2px 0 #ACA899;"></div>
<span class="t" style="left:869px;top:349px;color:#000;">2</span>
<div style="left:886px;top:348px;width:7px;height:7px;background:#808080;box-shadow:inset 1px 1px 0 #404040,inset -1px -1px 0 #fff;"></div>
<div style="left:901px;top:340px;width:55px;height:30px;background:#ECE9D8;box-shadow:inset 1px 1px 0 #ACA899,inset -1px -1px 0 #FFFFFF,inset 2px 2px 0 #FFFFFF,inset -2px -2px 0 #ACA899;"></div>
<span class="t" style="left:925px;top:349px;color:#000;">5</span>
<div style="left:942px;top:348px;width:7px;height:7px;background:#808080;box-shadow:inset 1px 1px 0 #404040,inset -1px -1px 0 #fff;"></div>
<div style="left:957px;top:340px;width:55px;height:30px;background:#ECE9D8;box-shadow:inset 1px 1px 0 #ACA899,inset -1px -1px 0 #FFFFFF,inset 2px 2px 0 #FFFFFF,inset -2px -2px 0 #ACA899;"></div>
<span class="t" style="left:978px;top:349px;color:#000;">10</span>
<div style="left:998px;top:348px;width:7px;height:7px;background:#808080;box-shadow:inset 1px 1px 0 #404040,inset -1px -1px 0 #fff;"></div>
<div style="left:733px;top:371px;width:55px;height:30px;background:#ECE9D8;box-shadow:inset 1px 1px 0 #ACA899,inset -1px -1px 0 #FFFFFF,inset 2px 2px 0 #FFFFFF,inset -2px -2px 0 #ACA899;"></div>
<span class="t" style="left:754px;top:380px;color:#000;">20</span>
<div style="left:774px;top:379px;width:7px;height:7px;background:#808080;box-shadow:inset 1px 1px 0 #404040,inset -1px -1px 0 #fff;"></div>
<div style="left:789px;top:371px;width:55px;height:30px;background:#ECE9D8;box-shadow:inset 1px 1px 0 #ACA899,inset -1px -1px 0 #FFFFFF,inset 2px 2px 0 #FFFFFF,inset -2px -2px 0 #ACA899;"></div>
<span class="t" style="left:810px;top:380px;color:#000;">50</span>
<div style="left:830px;top:379px;width:7px;height:7px;background:#808080;box-shadow:inset 1px 1px 0 #404040,inset -1px -1px 0 #fff;"></div>
<div style="left:845px;top:371px;width:55px;height:30px;background:#ECE9D8;box-shadow:inset 1px 1px 0 #ACA899,inset -1px -1px 0 #FFFFFF,inset 2px 2px 0 #FFFFFF,inset -2px -2px 0 #ACA899;"></div>
<span class="t" style="left:863px;top:380px;color:#000;">100</span>
<div style="left:886px;top:379px;width:7px;height:7px;background:#808080;box-shadow:inset 1px 1px 0 #404040,inset -1px -1px 0 #fff;"></div>
<div style="left:735px;top:451px;width:13px;height:13px;background:#fff;box-shadow:inset 1px 1px 0 #ACA899,inset -1px -1px 0 #FFFFFF,inset 2px 2px 0 #716F64,inset -2px -2px 0 #ECE9D8;"></div>
<span class="t" style="left:753px;top:451px;color:#000;">Close Loop Control</span>
<div style="left:739px;top:649px;width:45px;height:45px;background:#d4d0c8;"></div>
<div style="left:795px;top:647px;width:158px;height:80px;background:#ECE9D8;box-shadow:inset 1px 1px 0 #ACA899,inset -1px -1px 0 #FFFFFF,inset 2px 2px 0 #FFFFFF,inset -2px -2px 0 #ACA899;"></div>
<svg class="a" style="left:748px;top:652px" width="26" height="38" viewBox="748 652 26 38">
<path d="M760.5 654.6L770.6 664.6H766.6V668.2H754.6V664.6H750.4Z" fill="#808080" stroke="#303030" stroke-width="1.1"/>
<rect x="750" y="670" width="21" height="2" fill="#303030"/>
<path d="M760.5 687.4L770.6 677.4H766.6V673.8H754.6V677.4H750.4Z" fill="#808080" stroke="#303030" stroke-width="1.1"/>
</svg>
<div style="left:809px;top:657px;width:60px;height:60px;background:#b2b2b2;"></div>
<div style="left:809px;top:657px;width:60px;height:60px;background:#c0c0c0;border-radius:6px;border:1px solid #dcdcdc;border-right-color:#a4a4a4;border-bottom-color:#a4a4a4;"></div>
<svg class="a" style="left:826px;top:663px" width="32" height="32" viewBox="826 663 32 32">
<path d="M829.6 666.4V691L853.4 678.2Z" fill="#808080"/>
<path d="M829.6 691.2L853.4 678.4" stroke="#fff" stroke-width="1.2"/>
<path d="M829.6 691V666.2L853.4 678" stroke="#000" stroke-width="1.2" fill="none"/>
</svg>
<span class="t" style="left:820px;top:695px;font-size:16px;line-height:16px;">START</span>
<div style="left:879px;top:657px;width:60px;height:60px;background:#b2b2b2;"></div>
<div style="left:879px;top:657px;width:60px;height:60px;background:#ff0;border-radius:6px;border:1px solid #ffffa0;border-right-color:#c8c800;border-bottom-color:#c8c800;"></div>
<div style="left:898px;top:671px;width:24px;height:24px;background:#f00;box-shadow:inset 1px 1px 0 #000,inset -1px -1px 0 #fff;"></div>
<span class="t" style="left:895px;top:697px;font-size:16px;line-height:16px;">STOP</span>

</body></html>
